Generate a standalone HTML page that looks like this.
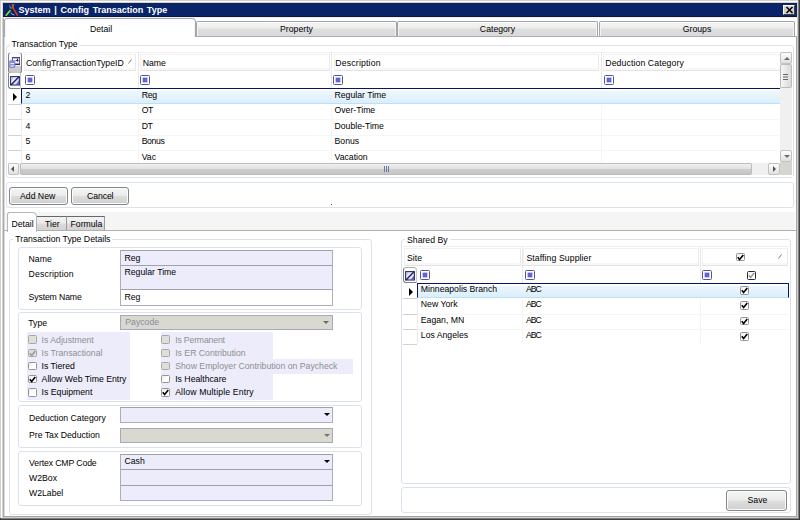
<!DOCTYPE html>
<html>
<head>
<meta charset="utf-8">
<title>System | Config Transaction Type</title>
<style>
*{box-sizing:border-box;margin:0;padding:0}
html,body{width:800px;height:520px;overflow:hidden;background:#fff}
body{font-family:"Liberation Sans",sans-serif;font-size:8.7px;color:#000;position:relative}
.a{position:absolute}
.t{position:absolute;white-space:nowrap;line-height:13px;height:13px}
#win{left:0;top:0;width:800px;height:520px;background:#fff}
#title{left:3px;top:3px;width:794px;height:14px;background:#0a246a;border-bottom:1px solid #06164a}
#title .t{color:#fff;font-weight:bold;font-size:9px;word-spacing:1.2px;left:15.5px;top:1px}
.tab{position:absolute;top:21px;height:15px;border:1px solid #a4a4ae;border-bottom:none;box-shadow:inset 0 1px 0 #fff,inset 1px 0 0 #f4f4f4,inset -1px 0 0 #f4f4f4;border-radius:2px 2px 0 0;background:linear-gradient(#f4f4f4 0%,#eeeeee 42%,#dedede 52%,#dadada 100%);text-align:center;line-height:15px}
.tab.sel{top:18px;height:19px;background:#fff;border-radius:3px 4px 0 0;line-height:20px;z-index:2;border-color:#a8a8b4}
.gb{position:absolute;border:1px solid #dbe2ec;border-radius:3px}
.gbl{position:absolute;background:#fff;padding:0 2px;line-height:13px;height:13px;white-space:nowrap}
.hline{position:absolute;height:1px;background:#e4e4e4}
.vline{position:absolute;width:1px;background:#e4e4e4}

.hdr{position:absolute;background:#fff;border:1px solid #f1f1f1;border-right-color:#e9e9e9;border-bottom-color:#e4e4e4;box-shadow:inset 0 -2px 1px #f8f8f8}
.rh{position:absolute;border:1px solid #808080;border-radius:3px;background:linear-gradient(#fff 0%,#f8f8f8 62%,#cdcdcd 66%,#c8c8c8 100%)}
.fi{position:absolute;width:10px;height:10px;border:1px solid #56568e;border-radius:1.5px;background:#fff}
.fi:after{content:"";position:absolute;left:2px;top:2px;width:4px;height:4px;background:#6262d4;box-shadow:0 0 0 0.5px #8a8ae0}
.selrow{position:absolute;border:1px solid #0a1466;border-bottom:1.5px solid #b6e2fb;border-right:none;background:linear-gradient(#fff 0,#fff 1.2px,#edf6fd 2.5px,#e4f2fb 60%,#dceefa 100%)}
.tri{position:absolute;width:0;height:0;border-left:4px solid #000;border-top:4px solid transparent;border-bottom:4px solid transparent}
.sb{position:absolute;background:#f0f0f0}
.sbtn{position:absolute;border:1px solid #c2c2c2;border-radius:2px;background:linear-gradient(#fdfdfd,#e0e0e0)}
.thumb{position:absolute;border:1px solid #bcbcbc;border-radius:2px;background:linear-gradient(#f4f4f4,#cfcfcf)}

.btn{position:absolute;border:1px solid #858585;border-radius:3px;background:linear-gradient(#f5f5f5 0%,#ebebeb 48%,#dddddd 52%,#cfcfcf 100%);box-shadow:inset 0 0 0 1px #fcfcfc;text-align:center}
.stab{position:absolute;top:216px;height:14px;border:1px solid #9c9c9c;border-top-color:#686868;border-bottom:none;background:linear-gradient(#f4f4f4 0%,#ebebeb 48%,#dddddd 52%,#d2d2d2 100%)}
.stab.sel{top:212px;height:19.5px;background:#fff;border-radius:3px 5px 0 0;z-index:2;border-color:#b4b4bc}
.arr{position:absolute;width:0;height:0;border-left:3px solid transparent;border-right:3px solid transparent;border-top:3px solid #000}

.ib{position:absolute;border:1px solid #dbe2ec;border-radius:3px}
.fld{position:absolute;border:1px solid #adadbd;border-top-color:#a0a0b0;background:#ececfb}
.lav{position:absolute;background:#ececfb}
.cb{position:absolute;width:9px;height:8.5px;border:1px solid #949494;background:linear-gradient(135deg,#ececec,#fff 60%);border-radius:1.5px}
.cb.dis{border-color:#a8a8a8;background:#dfdfd8}
.g{color:#8f8f8f}
svg{position:absolute;overflow:visible}
</style>
</head>
<body>
<div id="win" class="a"></div>
<!-- frame -->
<div class="a" style="left:0;top:0;width:800px;height:1px;background:#d4d0c8"></div>
<div class="a" style="left:0;top:0;width:1px;height:520px;background:#d4d0c8"></div>
<div class="a" style="left:1px;top:1px;width:798px;height:1px;background:#fff"></div>
<div class="a" style="left:1px;top:1px;width:1px;height:518px;background:#fff"></div>
<div class="a" style="left:2px;top:2px;width:796px;height:1px;background:#d4d0c8"></div>
<div class="a" style="left:2px;top:2px;width:1px;height:516px;background:#d8d6d0"></div>
<div class="a" style="left:3px;top:17px;width:1px;height:499px;background:#a8a8b0"></div><div class="a" style="left:4px;top:37px;width:1px;height:479px;background:#dcdce0"></div>
<div class="a" style="left:3px;top:516px;width:794px;height:1px;background:#a2a2a8"></div>
<div class="a" style="left:796px;top:36px;width:1px;height:481px;background:#a2a2a8"></div>
<div class="a" style="left:797px;top:2px;width:1px;height:516px;background:#d4d0c8"></div>
<div class="a" style="left:2px;top:517px;width:796px;height:1px;background:#d4d0c8"></div>
<div class="a" style="left:798px;top:0;width:2px;height:520px;background:#404040"></div>
<div class="a" style="left:0;top:518px;width:800px;height:2px;background:#404040"></div>
<div class="a" style="left:798px;top:0;width:1px;height:518px;background:#808080"></div>
<div class="a" style="left:1px;top:518px;width:798px;height:1px;background:#808080"></div>
<div id="title" class="a"><span class="t">System | Config Transaction Type</span>
<svg style="left:1px;top:0" width="15" height="14" viewBox="3 3 15 14">
<path d="M8.6 5.3 L9.6 8.6" stroke="#6f8fd8" stroke-width="1" fill="none"/>
<path d="M10 12.6 Q10.8 15.2 13.4 14.8" stroke="#a9bdf0" stroke-width="0.9" fill="none"/>
<path d="M5.2 15.2 L9.4 10.2" stroke="#86dc2c" stroke-width="1.7" fill="none" stroke-linecap="round"/>
<path d="M9.4 10.2 L10.6 8.6" stroke="#1c3010" stroke-width="1.5" fill="none"/>
<path d="M10.6 8.6 L13 4.2" stroke="#3fae3c" stroke-width="1.3" fill="none"/>
<path d="M11.2 4.6 L12.6 8.8 L16.4 15.2" stroke="#ee3a1a" stroke-width="1.5" fill="none" stroke-linecap="round"/>
</svg>
<div class="a" style="left:780px;top:2px;width:12px;height:10px;background:#d4d0c8;border:1px solid;border-color:#fff #404040 #404040 #fff"></div>
<svg style="left:783px;top:4px" width="7" height="6" viewBox="0 0 7 6"><path d="M0.5 0 L6.5 6 M6.5 0 L0.5 6" stroke="#000" stroke-width="1.5" fill="none"/></svg>
</div>
<div class="a" style="left:3px;top:17px;width:794px;height:1px;background:#f4f0dc"></div>

<!-- top tabs -->
<div class="a" style="left:4px;top:36px;width:793px;height:1px;background:#acacb4"></div>
<div class="tab sel" style="left:4px;width:192px;padding-left:2px">Detail</div>
<div class="tab" style="left:196px;width:201px">Property</div>
<div class="tab" style="left:397px;width:201px">Category</div>
<div class="tab" style="left:599px;width:196px">Groups</div>

<!-- SECTION: top grid -->
<div class="gb" style="left:6px;top:44.5px;width:788px;height:133px"></div>
<div class="gbl" style="left:9.5px;top:38.3px">Transaction Type</div>
<div class="a" style="left:8px;top:52px;width:785px;height:125px;background:#fff"></div>
<!-- header cells -->
<div class="rh" style="left:8px;top:52px;width:14px;height:22px"></div>
<div class="hdr" style="left:24px;top:54px;width:112px;height:17px"></div>
<div class="hdr" style="left:140px;top:54px;width:190px;height:17px"></div>
<div class="hdr" style="left:334px;top:54px;width:265px;height:17px"></div>
<div class="hdr" style="left:603px;top:54px;width:181px;height:17px"></div>
<div class="a" style="left:8px;top:52px;width:771px;height:1px;background:#f0f0f0"></div>
<div class="vline" style="left:138px;top:52px;height:36px;background:#e8e8e8"></div>
<div class="vline" style="left:331px;top:52px;height:36px;background:#e8e8e8"></div>
<div class="vline" style="left:601px;top:52px;height:36px;background:#e8e8e8"></div>
<span class="t" style="left:26px;top:57.3px">ConfigTransactionTypeID</span>
<span class="t" style="left:142.7px;top:57.3px">Name</span>
<span class="t" style="left:335.3px;top:57.3px;letter-spacing:0.18px">Description</span>
<span class="t" style="left:605.3px;top:57.3px;letter-spacing:0.1px">Deduction Category</span>
<!-- filter row -->
<div class="rh" style="left:8px;top:73px;width:13px;height:16px;border-radius:0 0 0 3px;border-top:none;border-right-color:#c8c8c8;background:#fff"></div>
<div class="fi" style="left:24.5px;top:75px"></div>
<div class="fi" style="left:140px;top:75px"></div>
<div class="fi" style="left:333px;top:75px"></div>
<div class="fi" style="left:603.5px;top:75px"></div>
<svg style="left:9px;top:57px" width="12" height="12" viewBox="9 57 12 12">
<rect x="12.5" y="57.8" width="7" height="6.4" fill="#fff" stroke="#5a5ab0" stroke-width="1"/>
<path d="M12 64.3 H20" stroke="#1c1c5c" stroke-width="1.2"/>
<path d="M12 57.6 H20" stroke="#3c3c90" stroke-width="1"/>
<path d="M15.6 60.6 H18.6 M17.6 58.6 V61.6" stroke="#20205a" stroke-width="1"/>
<rect x="9.6" y="60.6" width="5.4" height="7" rx="0.8" fill="#8c8cdc" stroke="#7474c8" stroke-width="0.6"/>
<path d="M10.4 63.6 H14.2 M10.4 66 H14.2" stroke="#f4f4ff" stroke-width="1"/>
</svg>
<svg style="left:10px;top:76px" width="10" height="10" viewBox="0 0 10 10">
<rect x="0.6" y="0.6" width="8.8" height="8.4" fill="#e6e6fa" stroke="#2c2c70" stroke-width="1.1"/>
<path d="M5.5 9 L9 4.5 V9 Z" fill="#5c5cc8"/>
<path d="M1 4.5 L4 1 H1 Z" fill="#b4b4e8"/>
<path d="M1 9 L9 0.8" stroke="#1c1c5c" stroke-width="1.3"/>
</svg>
<svg style="left:128px;top:59px" width="4" height="5" viewBox="0 0 4 5"><path d="M0.5 4.5 L3.5 0.5" stroke="#777" stroke-width="1" fill="none"/></svg>
<!-- rows -->
<div class="selrow" style="left:21px;top:88px;width:759px;height:15.5px"></div>
<div class="tri" style="left:13px;top:93px"></div>
<div class="vline" style="left:21px;top:104px;height:59px;background:#ececec"></div>
<div class="hline" style="left:8px;top:103.5px;width:13px;background:#d2d2d2"></div>
<div class="hline" style="left:8px;top:119px;width:13px;background:#d2d2d2"></div>
<div class="hline" style="left:8px;top:134.5px;width:13px;background:#d2d2d2"></div>
<div class="hline" style="left:8px;top:149.7px;width:13px;background:#d2d2d2"></div>
<div class="hline" style="left:22px;top:119px;width:757px;background:#f6f6f6"></div>
<div class="hline" style="left:22px;top:134.5px;width:757px;background:#f6f6f6"></div>
<div class="hline" style="left:22px;top:150px;width:757px;background:#f6f6f6"></div>
<div class="vline" style="left:138px;top:105px;height:58px;background:#f5f5f5"></div>
<div class="vline" style="left:331px;top:105px;height:58px;background:#f5f5f5"></div>
<div class="vline" style="left:601px;top:105px;height:58px;background:#f5f5f5"></div>
<span class="t" style="left:25.5px;top:88.5px">2</span><span class="t" style="left:141.7px;top:88.5px;letter-spacing:-0.3px">Reg</span><span class="t" style="left:334.5px;top:88.5px">Regular Time</span>
<span class="t" style="left:25.5px;top:103.9px">3</span><span class="t" style="left:141.7px;top:103.9px;letter-spacing:-0.5px">OT</span><span class="t" style="left:334.5px;top:103.9px">Over-Time</span>
<span class="t" style="left:25.5px;top:119.6px">4</span><span class="t" style="left:141.7px;top:119.6px;letter-spacing:-0.5px">DT</span><span class="t" style="left:334.5px;top:119.6px">Double-Time</span>
<span class="t" style="left:25.5px;top:134.6px">5</span><span class="t" style="left:141.7px;top:134.6px;letter-spacing:-0.4px">Bonus</span><span class="t" style="left:334.5px;top:134.6px">Bonus</span>
<span class="t" style="left:25.5px;top:150.5px">6</span><span class="t" style="left:141.7px;top:150.5px;letter-spacing:0px">Vac</span><span class="t" style="left:334.5px;top:150.5px">Vacation</span>
<!-- scrollbars -->
<div class="sb" style="left:780px;top:52px;width:12px;height:111px"></div>
<div class="sbtn" style="left:780px;top:52px;width:12px;height:12px"></div>
<div class="a" style="left:783.5px;top:57px;width:0;height:0;border-left:3px solid transparent;border-right:3px solid transparent;border-bottom:3px solid #6a6a6a"></div>
<div class="thumb" style="left:780px;top:64px;width:12px;height:24px;background:linear-gradient(90deg,#f6f6f6,#dadada)"></div>
<div class="a" style="left:783px;top:73.5px;width:5px;height:1px;background:#666;box-shadow:0 2.5px 0 #666,0 5px 0 #666"></div>
<div class="sbtn" style="left:780px;top:150px;width:12px;height:12px"></div>
<div class="a" style="left:783.5px;top:155px;width:0;height:0;border-left:3px solid transparent;border-right:3px solid transparent;border-top:3px solid #6a6a6a"></div>
<div class="sb" style="left:8px;top:163px;width:772px;height:11.5px"></div>
<div class="a" style="left:780px;top:162px;width:12px;height:12.5px;background:#d6d6ce"></div>
<div class="sbtn" style="left:8px;top:163px;width:11px;height:11.5px"></div>
<div class="a" style="left:11px;top:166px;width:0;height:0;border-top:3px solid transparent;border-bottom:3px solid transparent;border-right:3px solid #555"></div>
<div class="thumb" style="left:20px;top:163px;width:732px;height:11.5px;background:linear-gradient(#f0f0f0 0%,#e2e2e2 45%,#cdcdcd 55%,#c4c4c4 100%)"></div>
<div class="a" style="left:384px;top:166px;width:1px;height:6px;background:#6878a8;box-shadow:2px 0 0 #6878a8,4px 0 0 #6878a8"></div>
<div class="sbtn" style="left:767.5px;top:163px;width:12px;height:11.5px"></div>
<div class="a" style="left:773px;top:166px;width:0;height:0;border-top:3px solid transparent;border-bottom:3px solid transparent;border-left:3px solid #555"></div>
<!-- SECTION: buttons -->
<div class="gb" style="left:6px;top:181.5px;width:788px;height:26px"></div>
<div class="btn" style="left:9px;top:186.5px;width:58.5px;height:18px"></div><span class="t" style="left:20px;top:189.6px">Add New</span>
<div class="btn" style="left:71px;top:186.5px;width:58px;height:18px"></div><span class="t" style="left:87px;top:189.6px;letter-spacing:-0.1px">Cancel</span>
<div class="a" style="left:331px;top:204px;width:1px;height:1px;background:#555"></div>
<!-- SECTION: subtabs -->
<div class="a" style="left:5px;top:211.5px;width:790px;height:19px;background:#f5f5f5"></div>
<div class="a" style="left:4px;top:230px;width:792px;height:1.4px;background:#b0b0b0;z-index:1"></div>
<div class="stab sel" style="left:7px;width:30px"></div>
<div class="stab" style="left:36px;width:31px"></div>
<div class="stab" style="left:66px;width:39px"></div>
<span class="t" style="left:11.5px;top:217.5px;z-index:3">Detail</span>
<span class="t" style="left:45px;top:217.5px">Tier</span>
<span class="t" style="left:70.5px;top:217.5px">Formula</span>
<!-- SECTION: left form -->
<div class="gb" style="left:9px;top:239px;width:363px;height:276px"></div>
<div class="gbl" style="left:13.3px;top:232.7px">Transaction Type Details</div>
<div class="ib" style="left:18px;top:247px;width:343.5px;height:63px"></div>
<div class="fld" style="left:120px;top:250px;width:213px;height:16px"></div>
<div class="fld" style="left:120px;top:265px;width:213px;height:25px"></div>
<div class="fld" style="left:120px;top:289px;width:213px;height:17px;background:#fff"></div>
<span class="t" style="left:28.6px;top:252.7px">Name</span><span class="t" style="left:28.6px;top:268.4px;letter-spacing:0.15px">Description</span><span class="t" style="left:28.6px;top:290.5px;letter-spacing:-0.14px">System Name</span>
<span class="t" style="left:124.5px;top:252.0px">Reg</span><span class="t" style="left:124.5px;top:265.8px">Regular Time</span><span class="t" style="left:124.5px;top:291.2px">Reg</span>
<div class="ib" style="left:18px;top:312px;width:343.5px;height:90px"></div>
<span class="t" style="left:28.3px;top:317px">Type</span>
<div class="fld" style="left:120px;top:315px;width:213px;height:15px;background:#d9d9d2;border-color:#a8a8b8"></div>
<span class="t g" style="left:125.3px;top:316.3px;color:#8c8c98">Paycode</span>
<div class="arr" style="left:323.3px;top:321px;border-top-color:#68686e"></div>
<div class="lav" style="left:27px;top:332px;width:103px;height:68px"></div>
<div class="lav" style="left:160.6px;top:332px;width:112.4px;height:68px"></div>
<div class="lav" style="left:160.6px;top:359.3px;width:192.4px;height:14.7px"></div>
<div class="cb dis" style="left:28px;top:335.2px"></div><span class="t g" style="left:41.6px;top:333.6px">Is Adjustment</span>
<div class="cb dis" style="left:28px;top:348.5px"></div><svg style="left:28px;top:348.5px" width="9" height="9" viewBox="0 0 9 9"><path d="M1.8 4.3 L3.6 6.4 L7.3 1.9" fill="none" stroke="#9a9a9a" stroke-width="1.6"/></svg><span class="t g" style="left:41.6px;top:346.8px">Is Transactional</span>
<div class="cb" style="left:28px;top:361.7px"></div><span class="t" style="left:41.6px;top:360.0px">Is Tiered</span>
<div class="cb" style="left:28px;top:374.8px"></div><svg style="left:28px;top:374.8px" width="9" height="9" viewBox="0 0 9 9"><path d="M1.8 4.3 L3.6 6.4 L7.3 1.9" fill="none" stroke="#000" stroke-width="1.6"/></svg><span class="t" style="left:41.6px;top:373.1px">Allow Web Time Entry</span>
<div class="cb" style="left:28px;top:388.0px"></div><span class="t" style="left:41.6px;top:386.3px">Is Equipment</span>
<div class="cb dis" style="left:161px;top:335.2px"></div><span class="t g" style="left:175.2px;top:333.6px;letter-spacing:-0.17px">Is Permanent</span>
<div class="cb dis" style="left:161px;top:348.5px"></div><span class="t g" style="left:175.2px;top:346.8px">Is ER Contribution</span>
<div class="cb dis" style="left:161px;top:361.7px"></div><span class="t g" style="left:175.2px;top:360.0px">Show Employer Contribution on Paycheck</span>
<div class="cb" style="left:161px;top:374.8px"></div><span class="t" style="left:175.2px;top:373.1px">Is Healthcare</span>
<div class="cb" style="left:161px;top:388.0px"></div><svg style="left:161.2px;top:388.0px" width="9" height="9" viewBox="0 0 9 9"><path d="M1.8 4.3 L3.6 6.4 L7.3 1.9" fill="none" stroke="#000" stroke-width="1.6"/></svg><span class="t" style="left:175.2px;top:386.3px;letter-spacing:0.14px">Allow Multiple Entry</span>
<div class="ib" style="left:18px;top:404.5px;width:343.5px;height:43px"></div>
<div class="fld" style="left:120px;top:407px;width:213px;height:16px"></div>
<div class="arr" style="left:323.5px;top:413.3px"></div>
<div class="fld" style="left:120px;top:427.5px;width:213px;height:15.5px;background:#d9d9d2;border-color:#a8a8b8"></div>
<div class="arr" style="left:323.5px;top:433.5px;border-top-color:#74747c"></div>
<span class="t" style="left:29px;top:411.5px">Deduction Category</span><span class="t" style="left:29px;top:428.5px">Pre Tax Deduction</span>
<div class="ib" style="left:18px;top:450.5px;width:343.5px;height:55px"></div>
<div class="fld" style="left:120px;top:453.5px;width:213px;height:16px"></div>
<div class="arr" style="left:323.5px;top:460px"></div>
<div class="fld" style="left:120px;top:468.5px;width:213px;height:17.5px"></div>
<div class="fld" style="left:120px;top:485px;width:213px;height:16px"></div>
<span class="t" style="left:124.5px;top:455px">Cash</span>
<span class="t" style="left:29px;top:456.5px;letter-spacing:-0.12px">Vertex CMP Code</span><span class="t" style="left:29px;top:471.7px">W2Box</span><span class="t" style="left:29px;top:486.5px">W2Label</span>
<!-- SECTION: right grid -->
<div class="gb" style="left:401px;top:239px;width:390px;height:245.4px"></div>
<div class="gbl" style="left:405px;top:233.5px">Shared By</div>
<div class="hdr" style="left:404px;top:248px;width:117px;height:18px"></div>
<div class="hdr" style="left:523px;top:248px;width:176px;height:18px"></div>
<div class="hdr" style="left:702px;top:248px;width:86px;height:18px"></div>
<span class="t" style="left:407px;top:251.5px">Site</span><span class="t" style="left:526.5px;top:251.5px;letter-spacing:0.08px">Staffing Supplier</span>
<div class="cb" style="left:736px;top:252.5px"></div><svg style="left:736px;top:252.5px" width="9" height="9" viewBox="0 0 9 9"><path d="M1.8 4.3 L3.6 6.4 L7.3 1.9" fill="none" stroke="#000" stroke-width="1.6"/></svg>
<svg style="left:778px;top:254px" width="4" height="5" viewBox="0 0 4 5"><path d="M0.5 4.5 L3.5 0.5" stroke="#777" stroke-width="1" fill="none"/></svg>
<div class="rh" style="left:403px;top:267px;width:14px;height:16px;border-radius:3px 3px 0 3px;border-right-color:#c8c8c8;border-top-color:#b0b0b0;background:#fff"></div>
<svg style="left:405px;top:270.5px" width="10" height="10" viewBox="0 0 10 10">
<rect x="0.6" y="0.6" width="8.8" height="8.4" fill="#e6e6fa" stroke="#2c2c70" stroke-width="1.1"/>
<path d="M5.5 9 L9 4.5 V9 Z" fill="#5c5cc8"/>
<path d="M1 4.5 L4 1 H1 Z" fill="#b4b4e8"/>
<path d="M1 9 L9 0.8" stroke="#1c1c5c" stroke-width="1.3"/>
</svg>
<div class="fi" style="left:419.7px;top:270px"></div><div class="fi" style="left:524.7px;top:270px"></div><div class="fi" style="left:702px;top:270px"></div>
<div class="cb" style="left:746.5px;top:270.5px;border-color:#2a2a2a;width:9px;height:9px"></div><svg style="left:746.5px;top:270.5px" width="9" height="9" viewBox="0 0 9 9"><path d="M1.8 4.3 L3.6 6.4 L7.3 1.9" fill="none" stroke="#8a8a8a" stroke-width="1.3"/></svg>
<div class="selrow" style="left:417px;top:282.5px;width:372px;height:15.5px;border-right:1px solid #0a1466"></div>
<div class="tri" style="left:408.5px;top:287.5px"></div>
<div class="vline" style="left:417px;top:298px;height:46px;background:#ececec"></div>
<div class="hline" style="left:403px;top:298px;width:14px;background:#d2d2d2"></div><div class="hline" style="left:403px;top:314px;width:14px;background:#d2d2d2"></div><div class="hline" style="left:403px;top:329px;width:14px;background:#d2d2d2"></div><div class="hline" style="left:403px;top:344px;width:14px;background:#d2d2d2"></div>
<div class="hline" style="left:418px;top:314px;width:371px;background:#f6f6f6"></div><div class="hline" style="left:418px;top:329px;width:371px;background:#f6f6f6"></div>
<div class="vline" style="left:522px;top:299px;height:45px;background:#f4f4f4"></div><div class="vline" style="left:700px;top:299px;height:45px;background:#f4f4f4"></div><div class="vline" style="left:522px;top:246px;height:37px;background:#e8e8e8"></div><div class="vline" style="left:700px;top:246px;height:37px;background:#e8e8e8"></div><div class="a" style="left:403px;top:246px;width:386px;height:1px;background:#f0f0f0"></div>
<span class="t" style="left:420.8px;top:283.0px">Minneapolis Branch</span><span class="t" style="left:526px;top:283.0px;letter-spacing:-1.1px">ABC</span><div class="cb" style="left:739.5px;top:286.2px"></div><svg style="left:739.5px;top:286.2px" width="9" height="9" viewBox="0 0 9 9"><path d="M1.8 4.3 L3.6 6.4 L7.3 1.9" fill="none" stroke="#000" stroke-width="1.6"/></svg>
<span class="t" style="left:420.8px;top:298.2px">New York</span><span class="t" style="left:526px;top:298.2px;letter-spacing:-1.1px">ABC</span><div class="cb" style="left:739.5px;top:301.4px"></div><svg style="left:739.5px;top:301.4px" width="9" height="9" viewBox="0 0 9 9"><path d="M1.8 4.3 L3.6 6.4 L7.3 1.9" fill="none" stroke="#000" stroke-width="1.6"/></svg>
<span class="t" style="left:420.8px;top:313.5px">Eagan, MN</span><span class="t" style="left:526px;top:313.5px;letter-spacing:-1.1px">ABC</span><div class="cb" style="left:739.5px;top:316.7px"></div><svg style="left:739.5px;top:316.7px" width="9" height="9" viewBox="0 0 9 9"><path d="M1.8 4.3 L3.6 6.4 L7.3 1.9" fill="none" stroke="#000" stroke-width="1.6"/></svg>
<span class="t" style="left:420.8px;top:328.8px">Los Angeles</span><span class="t" style="left:526px;top:328.8px;letter-spacing:-1.1px">ABC</span><div class="cb" style="left:739.5px;top:332.0px"></div><svg style="left:739.5px;top:332.0px" width="9" height="9" viewBox="0 0 9 9"><path d="M1.8 4.3 L3.6 6.4 L7.3 1.9" fill="none" stroke="#000" stroke-width="1.6"/></svg>
<div class="gb" style="left:401px;top:487px;width:390px;height:26px"></div>
<div class="btn" style="left:726px;top:490px;width:61px;height:21px"></div><span class="t" style="left:747.5px;top:494px">Save</span>
</body>
</html>
